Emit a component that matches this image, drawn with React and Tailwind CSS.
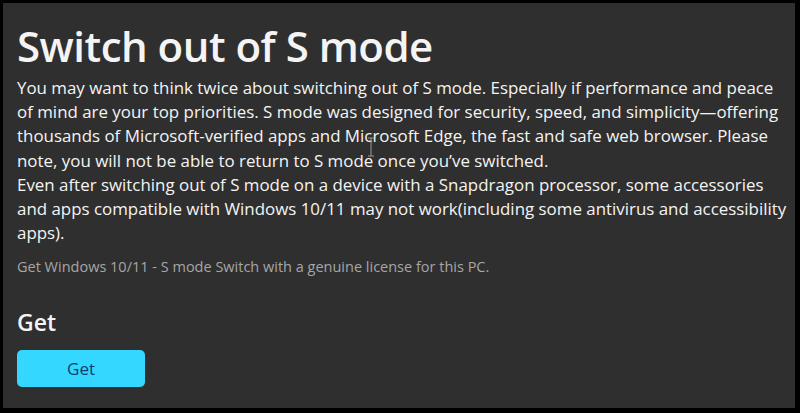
import React from 'react';

const bodyLines = [
  'You may want to think twice about switching out of S mode. Especially if performance and peace',
  'of mind are your top priorities. S mode was designed for security, speed, and simplicity\u2014offering',
  'thousands of Microsoft-verified apps and Microsoft Edge, the fast and safe web browser. Please',
  'note, you will not be able to return to S mode once you\u2019ve switched.',
  'Even after switching out of S mode on a device with a Snapdragon processor, some accessories',
  'and apps compatible with Windows 10/11 may not work(including some antivirus and accessibility',
  'apps).',
];

const App = () => {
  return (
    <div className="w-[800px] h-[413px] bg-black pt-[3px] pl-[3px] overflow-hidden" style={{ fontFamily: '"Open Sans", "Noto Sans", sans-serif' }}>
      <div className="relative w-[792px] h-[405px] bg-[#2f2f2f] pl-[14px] pt-[15px] text-[#f4f4f4]">
        <h1 className="text-[42px] leading-[56px] font-semibold tracking-[-0.5px]">Switch out of S mode</h1>

        <div className="mt-[2px] text-[16.9px] leading-[24.2px]">
          {bodyLines.map((line, i) => (
            <div key={i} className="whitespace-nowrap">{line}</div>
          ))}
        </div>

        <p className="mt-[13px] text-[14.5px] leading-[18px] text-[#a6a6a6]">
          Get Windows 10/11 - S mode Switch with a genuine license for this PC.
        </p>

        <h2 className="mt-[32px] text-[23px] leading-[28px] font-semibold">Get</h2>

        <button className="mt-[14px] w-[128px] h-[37px] rounded-[5px] bg-[#33d7ff] text-[#103f6e] text-[17px] flex items-center justify-center">
          Get
        </button>

        {/* text cursor */}
        <svg className="absolute left-[364px] top-[134px]" width="8" height="20" viewBox="0 0 8 20">
          <path d="M1 1h6M4 1v18M1 19h6" stroke="#9a9a9a" strokeWidth="1" fill="none" />
        </svg>
      </div>
    </div>
  );
};

export default App;
